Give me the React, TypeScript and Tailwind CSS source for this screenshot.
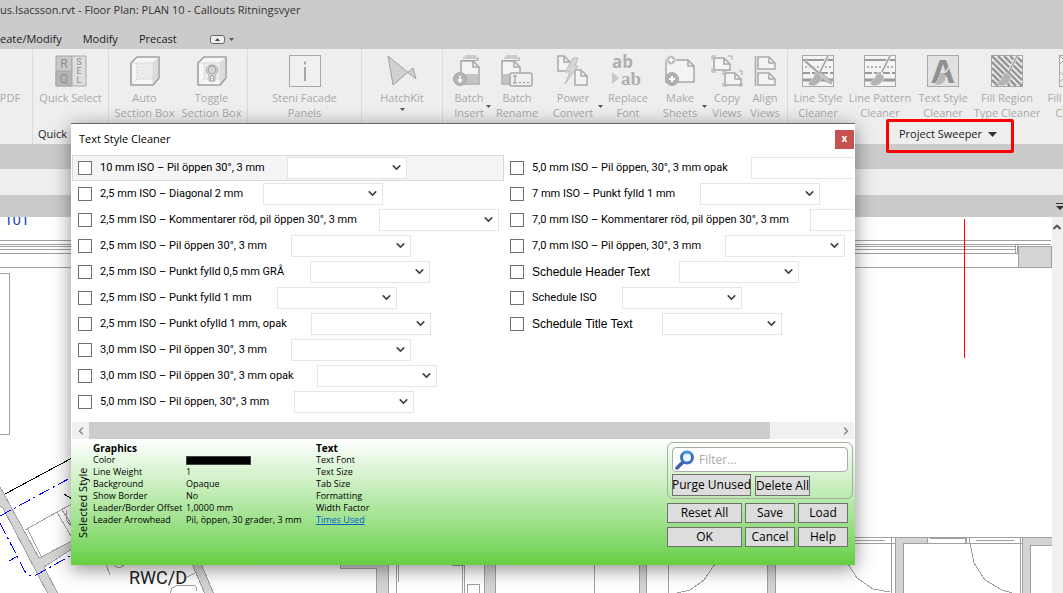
import { ReactNode, useState } from 'react'
import { ChevronDown, ChevronLeft, ChevronRight, ChevronUp } from 'lucide-react'

type StyleRow = {
  name: string
  labelWidth: string
  arial?: boolean
}

const leftStyles: StyleRow[] = [
  { name: '10 mm ISO – Pil öppen 30°, 3 mm', labelWidth: 'w-[187px]' },
  { name: '2,5 mm ISO – Diagonal 2 mm', labelWidth: 'w-[163px]' },
  {
    name: '2,5 mm ISO – Kommentarer röd, pil öppen 30°, 3 mm',
    labelWidth: 'w-[279px]'
  },
  { name: '2,5 mm ISO – Pil öppen 30°, 3 mm', labelWidth: 'w-[191px]' },
  { name: '2,5 mm ISO – Punkt fylld 0,5 mm GRÅ', labelWidth: 'w-[210px]' },
  { name: '2,5 mm ISO – Punkt fylld 1 mm', labelWidth: 'w-[177px]' },
  { name: '2,5 mm ISO – Punkt ofylld 1 mm, opak', labelWidth: 'w-[211px]' },
  { name: '3,0 mm ISO – Pil öppen 30°, 3 mm', labelWidth: 'w-[191px]' },
  { name: '3,0 mm ISO – Pil öppen 30°, 3 mm opak', labelWidth: 'w-[217px]' },
  { name: '5,0 mm ISO – Pil öppen, 30°, 3 mm', labelWidth: 'w-[194px]' }
]

const rightStyles: StyleRow[] = [
  { name: '5,0 mm ISO – Pil öppen, 30°, 3 mm opak', labelWidth: 'w-[219px]' },
  { name: '7 mm ISO – Punkt fylld 1 mm', labelWidth: 'w-[168px]' },
  {
    name: '7,0 mm ISO – Kommentarer röd, pil öppen 30°, 3 mm',
    labelWidth: 'w-[278px]'
  },
  { name: '7,0 mm ISO – Pil öppen, 30°, 3 mm', labelWidth: 'w-[193px]' },
  { name: 'Schedule Header Text', labelWidth: 'w-[147px]', arial: true },
  { name: 'Schedule ISO', labelWidth: 'w-[90px]' },
  { name: 'Schedule Title Text', labelWidth: 'w-[130px]', arial: true }
]

const graphics = [
  ['Line Weight', '1'],
  ['Background', 'Opaque'],
  ['Show Border', 'No'],
  ['Leader/Border Offset', '1,0000 mm'],
  ['Leader Arrowhead', 'Pil, öppen, 30 grader, 3 mm']
]

const textProps = [
  'Text Font',
  'Text Size',
  'Tab Size',
  'Formatting',
  'Width Factor'
]

const Icon = ({ children }: { children: ReactNode }) => (
  <svg
    width="32"
    height="32"
    viewBox="0 0 32 32"
    fill="none"
    stroke="#a8a8a8"
    className="shrink-0 overflow-visible">
    {children}
  </svg>
)

const Page = ({ x, y, w, h }: { x: number; y: number; w: number; h: number }) => (
  <g transform={`translate(${x} ${y})`}>
    <path
      d={`M0 0H${w - 6}L${w} 6V${h}H0Z`}
      fill="#f4f4f4"
      stroke="#a8a8a8"
      strokeWidth="1.5"
    />
    <path d={`M${w - 6} 0V6H${w}`} stroke="#a8a8a8" strokeWidth="1.5" />
  </g>
)

const Brush = () => (
  <>
    <path d="M26 1L18 16" stroke="#eee" strokeWidth="3" />
    <path d="M26 1L18 17" stroke="#a0a0a0" strokeWidth="1.5" />
    <path
      d="M14 17L20 21C20 26 16 30 11 31C8 31 6 29 6 28C10 26 11 22 14 17Z"
      fill="#b4b4b4"
      stroke="#eee"
      strokeWidth="0.5"
    />
  </>
)

const Cube = () => (
  <>
    <path
      d="M2 8L8 2H30V23L24 30H2Z"
      fill="#f7f7f7"
      strokeWidth="1.2"
      strokeLinejoin="round"
    />
    <path d="M24 8L30 2V23L24 30Z" fill="#dcdcdc" stroke="none" />
    <path d="M8 8H24V24H8Z" fill="#ececec" stroke="none" />
    <path d="M2 8H24V30M24 8L30 2" stroke="#dcdcdc" />
    <path d="M8 8V24H24M8 24L2 30" stroke="#d0d0d0" strokeDasharray="2 1" />
    <path
      d="M2 8L8 2H30V23L24 30H2Z"
      stroke="#a0a0a0"
      strokeWidth="1.2"
      strokeLinejoin="round"
    />
  </>
)

const QuickSelectIcon = () => (
  <Icon>
    <path d="M1 1H17V31H1Z" fill="#c9c9c9" />
    <path d="M1 16H17V31H1Z" fill="#b5b5b5" />
    <path d="M17 1H31V31H17Z" fill="#dedede" />
    <g
      fill="#8f8f8f"
      stroke="none"
      fontFamily="Roboto, sans-serif"
      textAnchor="middle">
      <text x="9" y="13" fontSize="12">
        R
      </text>
      <text x="9" y="28" fontSize="12">
        Q
      </text>
      <text x="24" y="10" fontSize="9">
        S
      </text>
      <text x="24" y="19" fontSize="9">
        E
      </text>
      <text x="24" y="28" fontSize="9">
        L
      </text>
    </g>
  </Icon>
)

const SectionBoxIcon = () => (
  <Icon>
    <Cube />
  </Icon>
)

const ToggleBoxIcon = () => (
  <Icon>
    <Cube />
    <path
      d="M13 20C8 16 10 10 16 10C22 10 24 16 19 20V26H13Z"
      fill="#f4f4f4"
      strokeWidth="1"
    />
    <circle cx="16" cy="15" r="4" fill="#d4d4d4" strokeWidth="1.5" />
    <path d="M14.500 20.500H17.500V26H14.500Z" fill="#e8e8e8" />
  </Icon>
)

const InfoIcon = () => (
  <Icon>
    <rect x="0.500" y="0.500" width="31" height="31" fill="#f0f0f0" />
    <path d="M16 12V26" strokeWidth="2" />
    <path d="M16 6.500V9.500" strokeWidth="2" />
  </Icon>
)

const HatchIcon = () => (
  <Icon>
    <path
      d="M2 1L30 24L27 13L7 30Z"
      fill="#d0d0d0"
      stroke="#a0a0a0"
      strokeLinejoin="round"
    />
  </Icon>
)

const Stack = () => (
  <>
    <path d="M11 1H22M9 3H24V6M7 5.500H23" strokeWidth="1.200" />
    <Page x={7} y={6} w={18} h={23} />
    <path d="M8 19H24V28H8Z" fill="#c4c4c4" stroke="none" />
  </>
)

const BatchInsertIcon = () => (
  <Icon>
    <g transform="translate(1 0)">
      <Stack />
    </g>
    <circle cx="7" cy="24" r="6.500" fill="#b4b4b4" />
    <path d="M7 20.500V26M5 24.500L7 27L9 24.500" stroke="#fff" strokeWidth="1.500" />
  </Icon>
)

const BatchRenameIcon = () => (
  <Icon>
    <g transform="translate(-6 0)">
      <Stack />
    </g>
    <rect x="9" y="18" width="22" height="13" rx="2" fill="#efefef" strokeWidth="1.500" />
    <path d="M12 21H16M12 28H16M14 21V28M18 27.500H20M22 27.500H24M26 27.500H28" stroke="#909090" />
  </Icon>
)

const PowerIcon = () => (
  <Icon>
    <Page x={1} y={1} w={12} h={15} />
    <Page x={18} y={15} w={12} h={15} />
    <path d="M16 3H21L18 11H21L8 29L13 17H8Z" fill="#d6d6d6" stroke="#bbb" />
  </Icon>
)

const ReplaceFontIcon = () => (
  <Icon>
    <g fill="#b0b0b0" stroke="none" fontWeight="700">
      <text x="0" y="13" fontSize="17" fontFamily="Open Sans, sans-serif">
        ab
      </text>
      <text x="9" y="30" fontSize="19" fontFamily="Liberation Serif, serif">
        ab
      </text>
      <path d="M0 17L7 23L0 29Z" fill="#c8c8c8" />
    </g>
  </Icon>
)

const MakeSheetsIcon = () => (
  <Icon>
    <Page x={2} y={5} w={28} h={22} />
    <circle cx="7" cy="5" r="4.500" fill="#b8b8b8" stroke="#e4e4e4" />
    <path d="M7 2.500V7.500M4.500 5H9.500" stroke="#fff" strokeWidth="1.500" />
    <circle cx="8" cy="24" r="6.500" fill="#b0b0b0" />
    <path d="M8 21V27M5 24H11" stroke="#fff" strokeWidth="2" />
  </Icon>
)

const CopyViewsIcon = () => (
  <Icon>
    <Page x={3} y={3} w={16} h={12} />
    <Page x={14} y={18} w={16} h={12} />
    <path
      d="M1 5V1H5M17 1H21V5M1 13V17H5M12 20V16H16M28 16H31V20M12 28V31H16M28 31H31V28"
    />
  </Icon>
)

const AlignViewsIcon = () => (
  <Icon>
    <path d="M6.500 1V31" strokeWidth="1.500" />
    <Page x={9} y={2} w={17} h={12} />
    <Page x={9} y={18} w={17} h={12} />
  </Icon>
)

const Ruled = () => (
  <>
    <rect x="0.500" y="0.500" width="31" height="31" fill="#f4f4f4" />
    <path d="M1 5H31" strokeWidth="2" stroke="#9a9a9a" />
    <path d="M3 12H31" strokeWidth="1.500" strokeDasharray="2 2" stroke="#9a9a9a" />
    <path d="M1 18H31" strokeWidth="2" strokeDasharray="7 2" stroke="#9a9a9a" />
    <path d="M1 25H31" strokeWidth="3" stroke="#9a9a9a" />
  </>
)

const LineStyleIcon = () => (
  <Icon>
    <Ruled />
    <path d="M3 6L28 27" stroke="#eee" strokeWidth="3" />
    <path d="M3 6L18 19" stroke="#a0a0a0" strokeWidth="2" />
    <path d="M18 17L27 24L30 29L23 26L16 20Z" fill="#c4c4c4" />
    <Brush />
  </Icon>
)

const LinePatternIcon = () => (
  <Icon>
    <Ruled />
    <Brush />
  </Icon>
)

const TextStyleIcon = () => (
  <Icon>
    <rect x="0.500" y="0.500" width="31" height="31" fill="#e2e2e2" />
    <text
      x="16"
      y="28"
      textAnchor="middle"
      fontSize="33"
      fontWeight="700"
      fontFamily="Open Sans, sans-serif"
      fill="#909090"
      stroke="none">
      A
    </text>
    <path d="M28 2L19 17" stroke="#dcdcdc" strokeWidth="1.500" />
    <path
      d="M14 17L19 21C19 26 16 29 12 30C9 30 8 29 8 28C11 26 12 22 14 17Z"
      fill="#b8b8b8"
      stroke="#e2e2e2"
      strokeWidth="0.500"
    />
  </Icon>
)

const FillRegionIcon = () => (
  <Icon>
    <rect x="0.500" y="0.500" width="31" height="31" fill="#f0f0f0" />
    <path
      d="M1 25L7 31M1 19L13 31M1 13L19 31M1 7L25 31M1 1L31 31M7 1L31 25M13 1L31 19M19 1L31 13M25 1L31 7"
      stroke="#989898"
      strokeWidth="2.500"
    />
    <Brush />
  </Icon>
)

const FillPatternIcon = () => (
  <Icon>
    <rect x="0.500" y="0.500" width="31" height="31" fill="#f0f0f0" />
    <path d="M0 0L32 32M0 16L16 32M0 10L10 0M0 28L28 0M8 32L32 8" />
  </Icon>
)

const Caret = () => (
  <svg width="5" height="3" viewBox="0 0 5 3" fill="#555">
    <path d="M0 0H5L2.500 3Z" />
  </svg>
)

type ToolProps = {
  label: string
  width: string
  icon?: ReactNode
  menu?: boolean
}

// Large ribbon button, label broken over two lines
const Tool = ({ label, width, icon, menu }: ToolProps) => (
  <button
    type="button"
    className={`relative flex h-[69px] shrink-0 flex-col items-center gap-[3px] whitespace-pre text-center leading-[15px] text-[#a9a9a9] ${width}`}>
    {icon ?? <span className="h-8" />}
    <span>{label}</span>
    {menu && (
      <span className="absolute right-1 bottom-[16px]">
        <Caret />
      </span>
    )}
  </button>
)

const Panel = ({
  children,
  caption,
  className
}: {
  children: ReactNode
  caption?: ReactNode
  className: string
}) => (
  <section
    className={`flex flex-col border-l border-[#dadada] pt-[6px] ${className}`}>
    <div className="flex justify-center">{children}</div>
    <div className="flex h-5 items-center whitespace-nowrap text-[#222]">
      {caption}
    </div>
  </section>
)

const Ribbon = () => (
  <div className="flex h-[95px] overflow-hidden bg-[#eee]">
    <section className="w-8 shrink-0 pt-[6px]">
      <Tool label="PDF" width="w-5" />
    </section>
    <Panel
      className="w-[76px] shrink-0"
      caption={<span className="pl-[5px]">Quick</span>}>
      <Tool label="Quick Select" width="w-[74px]" icon={<QuickSelectIcon />} />
    </Panel>
    <Panel className="w-[139px] shrink-0">
      <Tool label={'Auto\nSection Box'} width="w-[67px]" icon={<SectionBoxIcon />} />
      <Tool label={'Toggle\nSection Box'} width="w-[67px]" icon={<ToggleBoxIcon />} />
    </Panel>
    <Panel className="w-[114px] shrink-0">
      <Tool label={'Steni Facade\nPanels'} width="w-20" icon={<InfoIcon />} />
    </Panel>
    <Panel className="w-[81px] shrink-0">
      <div className="flex flex-col items-center">
        <Tool label="HatchKit" width="w-16" icon={<HatchIcon />} />
        <span className="-mt-4">
          <Caret />
        </span>
      </div>
    </Panel>
    <Panel className="w-[345px] shrink-0">
      <Tool label={'Batch\nInsert'} width="w-[52px]" icon={<BatchInsertIcon />} menu />
      <Tool label={'Batch\nRename'} width="w-11" icon={<BatchRenameIcon />} />
      <Tool label={'Power\nConvert'} width="w-[68px]" icon={<PowerIcon />} menu />
      <Tool label={'Replace\nFont'} width="w-[42px]" icon={<ReplaceFontIcon />} />
      <Tool label={'Make\nSheets'} width="w-[62px]" icon={<MakeSheetsIcon />} menu />
      <Tool label={'Copy\nViews'} width="w-8" icon={<CopyViewsIcon />} />
      <Tool label={'Align\nViews'} width="w-11" icon={<AlignViewsIcon />} />
    </Panel>
    <Panel
      className="min-w-0 flex-1"
      caption={
        <button type="button" className="ml-[111px] flex items-center gap-[6px]">
          Project Sweeper
          <svg width="9" height="5" viewBox="0 0 9 5" fill="#333">
            <path d="M0 0H9L4.500 5Z" />
          </svg>
        </button>
      }>
      <div className="flex w-full">
        <Tool label={'Line Style\nCleaner'} width="w-15" icon={<LineStyleIcon />} />
        <Tool label={'Line Pattern\nCleaner'} width="w-16" icon={<LinePatternIcon />} />
        <Tool label={'Text Style\nCleaner'} width="w-[62px]" icon={<TextStyleIcon />} />
        <Tool label={'Fill Region\nType Cleaner'} width="w-[66px]" icon={<FillRegionIcon />} />
        <Tool label={'Fill Pattern\nCleaner'} width="w-[70px]" icon={<FillPatternIcon />} />
      </div>
    </Panel>
  </div>
)

const FloorPlan = () => (
  <svg
    className="absolute inset-0 h-full w-full"
    fill="none"
    stroke="#a0a0a0"
    shapeRendering="crispEdges">
    <text
      x="4"
      y="8"
      fontSize="15"
      fontFamily="Roboto, sans-serif"
      fill="#1c46b8"
      stroke="none">
      101
    </text>
    <path d="M0 23.500H1051M0 27.500H1051M0 29.500H1015M0 32.500H1015M0 36.500H1018M0 50.500H1051M1015.500 28V36M1017.500 28V36" />
    <path d="M1018.500 29.500H1051V50.500H1018.500Z" fill="#d4d4d4" />
    <path d="M964.500 2V141" stroke="#f00" />
    <path d="M-1 56.500H9.500V217.500H-1" />

    <path
      d="M-1 268L39 341L72 324V332L44 350L58 377H48L3 291L-1 289Z"
      fill="#d4d4d4"
    />
    <path d="M5 277L72 241" stroke="#000" />
    <path d="M64 277L72 282" stroke="#000" />
    <path
      d="M0 299L72 260M0 306L17 339L24 353Q30 362 38 357L70 339M9 344L18 339"
      stroke="#00f"
      strokeDasharray="12 4 2 4"
    />
    <path d="M25 313L57 295L72 287M27 311L42 341M57 295L72 321M62 293L72 308M66 293V303L72 310" />

    <path d="M192 347L205 377H214L201 347Z" fill="#d4d4d4" />
    <path d="M106 347L110 358M114 348Q119 353 124 348M170 377L172 371Q176 368 184 368H192Q197 368 197 374M185 361L197 355" />
    <text
      x="129"
      y="367"
      fontSize="18"
      fontFamily="Roboto, sans-serif"
      fill="#222"
      stroke="none">
      RWC/D
    </text>

    <path d="M340.500 340V351.500H376.500V377H388.500V340Z" fill="#d4d4d4" />
    <path d="M396.500 340V377M398.500 340V365M452 348.500H464.500V377M462.500 348V377M467.500 377V367.500H479.500V377M594.500 340V377M668.500 340V377" />
    <path d="M484.500 340H495.500V378H484.500ZM639.500 340H646.500V378H639.500ZM767.500 340H775.500V378H767.500Z" fill="#d4d4d4" />
    <path d="M715 347L704 363L690 373L677 376M848 347L857 361L873 372L890 375" />
    <path d="M855 320.500H1051M855 326.500H895M855 323.500H885M891.500 320V377M976 323.500H1014M1020.500 320V377" />
    <path d="M895.500 320.500H927.500V326.500H903.500V378H895.500Z" fill="#d4d4d4" />
    <path d="M903 326.500H1022M929.500 321.500H965.500V326.500M966.500 320V326M969.500 320V326M970 326L974 346L985 363L1002 373L1012 376" />
    <path d="M1022.500 320.500H1052V328.500H1030.500V378H1022.500Z" fill="#d4d4d4" />
  </svg>
)

const StyleItem = ({ row, selected }: { row: StyleRow; selected?: boolean }) => {
  const [checked, setChecked] = useState(false)

  return (
    <div
      className={`flex h-[26px] items-center border pl-[5px] ${
        selected ? 'border-[#dadada] bg-[#f5f5f5]' : 'border-transparent'
      }`}>
      <label className="flex shrink-0 items-center gap-2 whitespace-nowrap">
        <input
          type="checkbox"
          checked={checked}
          onChange={(e) => setChecked(e.target.checked)}
          className="size-[14px] appearance-none border border-[#707070] bg-white checked:bg-[#707070]"
        />
        <span
          className={`${row.labelWidth} ${
            row.arial
              ? "font-['Liberation_Sans',sans-serif] text-[12px]"
              : 'font-[Roboto,sans-serif] text-[11px]'
          }`}>
          {row.name}
        </span>
      </label>
      <div className="relative w-[120px] shrink-0">
        <select
          aria-label={`Replace ${row.name} with`}
          className="block h-[22px] w-full appearance-none border border-[#e2e5ec] bg-white">
          <option></option>
        </select>
        <ChevronDown
          size={13}
          strokeWidth={3}
          className="pointer-events-none absolute top-1 right-1 text-[#444]"
        />
      </div>
    </div>
  )
}

const DialogButton = ({
  children,
  className
}: {
  children: ReactNode
  className: string
}) => (
  <button
    type="button"
    className={`flex shrink-0 items-center justify-center whitespace-nowrap border border-[#707070] bg-[#ddd] leading-4 ${className}`}>
    {children}
  </button>
)

const SelectedStyle = () => (
  <div className="flex">
    <div className="mt-6 ml-1 h-20 w-4 rotate-180 text-center text-[11px] leading-4 [writing-mode:vertical-rl]">
      Selected Style
    </div>
    <table className="mt-[3px] ml-[2px] h-fit border-collapse text-left text-[9px] leading-3">
      <tbody>
        <tr>
          <th className="w-[93px] p-0 text-[10px]">Graphics</th>
          <td className="w-[130px] p-0"></td>
        </tr>
        <tr>
          <td className="p-0">Color</td>
          <td className="p-0">
            <div className="h-[9px] w-[65px] border border-[#444] bg-black" />
          </td>
        </tr>
        {graphics.map(([name, value]) => (
          <tr key={name}>
            <td className="whitespace-nowrap p-0">{name}</td>
            <td className="whitespace-nowrap p-0">{value}</td>
          </tr>
        ))}
      </tbody>
    </table>
    <ul className="mt-[3px] text-[9px] leading-3">
      <li className="text-[10px] font-bold">Text</li>
      {textProps.map((name) => (
        <li key={name}>{name}</li>
      ))}
      <li>
        <a href="#times-used" className="text-[#0066cc] underline">
          Times Used
        </a>
      </li>
    </ul>
  </div>
)

const Actions = () => {
  const [filter, setFilter] = useState('')

  return (
    <div className="mr-px w-[186px] shrink-0 pt-[3px] text-[12px]">
      <div className="h-[57px] rounded-md border border-[#aaa] px-1 pt-1">
        <label className="flex h-[25px] items-center gap-1 rounded border border-[#aaa] bg-white px-[2px]">
          <svg width="20" height="20" viewBox="0 0 20 20" fill="none" className="shrink-0">
            <path d="M2 18L8 12" stroke="#3f5fa8" strokeWidth="3.500" strokeLinecap="round" />
            <circle cx="12" cy="7.500" r="5.500" fill="#eaf5ff" stroke="#3d72c0" strokeWidth="3" />
            <path d="M8 4A5.500 5.500 0 0 1 16 4" stroke="#4aa0dc" strokeWidth="2" />
          </svg>
          <input
            type="text"
            aria-label="Filter"
            placeholder="Filter..."
            value={filter}
            onChange={(e) => setFilter(e.target.value)}
            className="w-full min-w-0 bg-transparent outline-none placeholder:text-[#aaa]"
          />
        </label>
        <div className="mt-[2px] flex items-end gap-1">
          <DialogButton className="h-[22px] w-[79px]">Purge Unused</DialogButton>
          <DialogButton className="h-5 w-[55px]">Delete All</DialogButton>
        </div>
      </div>
      <div className="mt-1 grid w-[181px] grid-cols-[75px_50px_50px] gap-x-[3px] gap-y-1">
        <DialogButton className="h-5">Reset All</DialogButton>
        <DialogButton className="h-5">Save</DialogButton>
        <DialogButton className="h-5">Load</DialogButton>
        <DialogButton className="h-5">OK</DialogButton>
        <DialogButton className="h-5">Cancel</DialogButton>
        <DialogButton className="h-5">Help</DialogButton>
      </div>
    </div>
  )
}

const CleanerDialog = () => (
  <div
    role="dialog"
    aria-label="Text Style Cleaner"
    className="absolute top-[123px] right-[208px] left-[71px] border-t border-[#666] bg-white text-black shadow-[0_4px_18px_rgba(0,0,0,0.45)]">
    <header className="flex h-[31px] items-center justify-between pr-px pl-2">
      <h1>Text Style Cleaner</h1>
      <button
        type="button"
        aria-label="Close"
        className="flex size-[19px] items-center justify-center bg-[#c75050] pb-[2px] text-[10px] font-bold text-white">
        x
      </button>
    </header>
    <div className="flex h-[267px] overflow-hidden pr-px pl-px">
      <div className="w-[432px] shrink-0">
        {leftStyles.map((row, i) => (
          <StyleItem key={row.name} row={row} selected={i === 0} />
        ))}
      </div>
      <div className="min-w-0 flex-1 overflow-hidden">
        {rightStyles.map((row) => (
          <StyleItem key={row.name} row={row} />
        ))}
      </div>
    </div>
    <div className="mx-px flex h-[17px] items-center bg-[#f0f0f0] text-[#888]">
      <button type="button" aria-label="Scroll left" className="flex w-[17px] justify-center">
        <ChevronLeft size={12} strokeWidth={3} />
      </button>
      <div className="flex h-full flex-1">
        <div className="h-full w-[91%] bg-[#cdcdcd]" />
      </div>
      <button type="button" aria-label="Scroll right" className="flex w-[17px] justify-center">
        <ChevronRight size={12} strokeWidth={3} />
      </button>
    </div>
    <div className="flex h-[126px] justify-between bg-linear-to-b from-white to-[#64cf3f] pr-px">
      <SelectedStyle />
      <Actions />
    </div>
  </div>
)

export default function App() {
  return (
    <div className="relative flex min-h-screen flex-col overflow-hidden bg-[#cbcbcb] font-['Open_Sans','Noto_Sans',sans-serif] text-[11px] text-[#333]">
      <div className="flex h-5 items-center whitespace-nowrap">
        us.Isacsson.rvt - Floor Plan: PLAN 10 - Callouts Ritningsvyer
      </div>
      <nav className="flex h-[29px] items-center gap-[21px] whitespace-nowrap pt-[9px] text-[#222]">
        <button type="button">eate/Modify</button>
        <button type="button">Modify</button>
        <button type="button">Precast</button>
        <button
          type="button"
          aria-label="Minimize ribbon"
          className="ml-3 flex items-center gap-1">
          <svg width="15" height="9" viewBox="0 0 15 9">
            <rect x="0.500" y="0.500" width="14" height="8" rx="2" fill="#eee" stroke="#666" />
            <path d="M5 6H10L7.500 3Z" fill="#444" />
          </svg>
          <Caret />
        </button>
      </nav>
      <Ribbon />
      <div className="h-[25px]" />
      <div className="h-[26px] bg-[#eee]" />
      <div className="flex h-[22px] items-center justify-end overflow-hidden">
        <svg width="7" height="7" viewBox="0 0 7 7" fill="#333">
          <path d="M0 0H8V1H0ZM0 3H8L4 7Z" />
        </svg>
      </div>
      <div className="flex flex-1">
        <div className="relative flex-1 overflow-hidden bg-white">
          <FloorPlan />
        </div>
        <div className="flex w-[11px] justify-end overflow-hidden bg-[#f0f0f0] pt-1">
          <ChevronUp size={12} strokeWidth={4} className="shrink-0 text-[#555]" />
        </div>
      </div>
      <CleanerDialog />
      <div className="pointer-events-none absolute top-[119px] left-[886px] h-[34px] w-[128px] rounded-[2px] border-3 border-[#f00]" />
    </div>
  )
}
